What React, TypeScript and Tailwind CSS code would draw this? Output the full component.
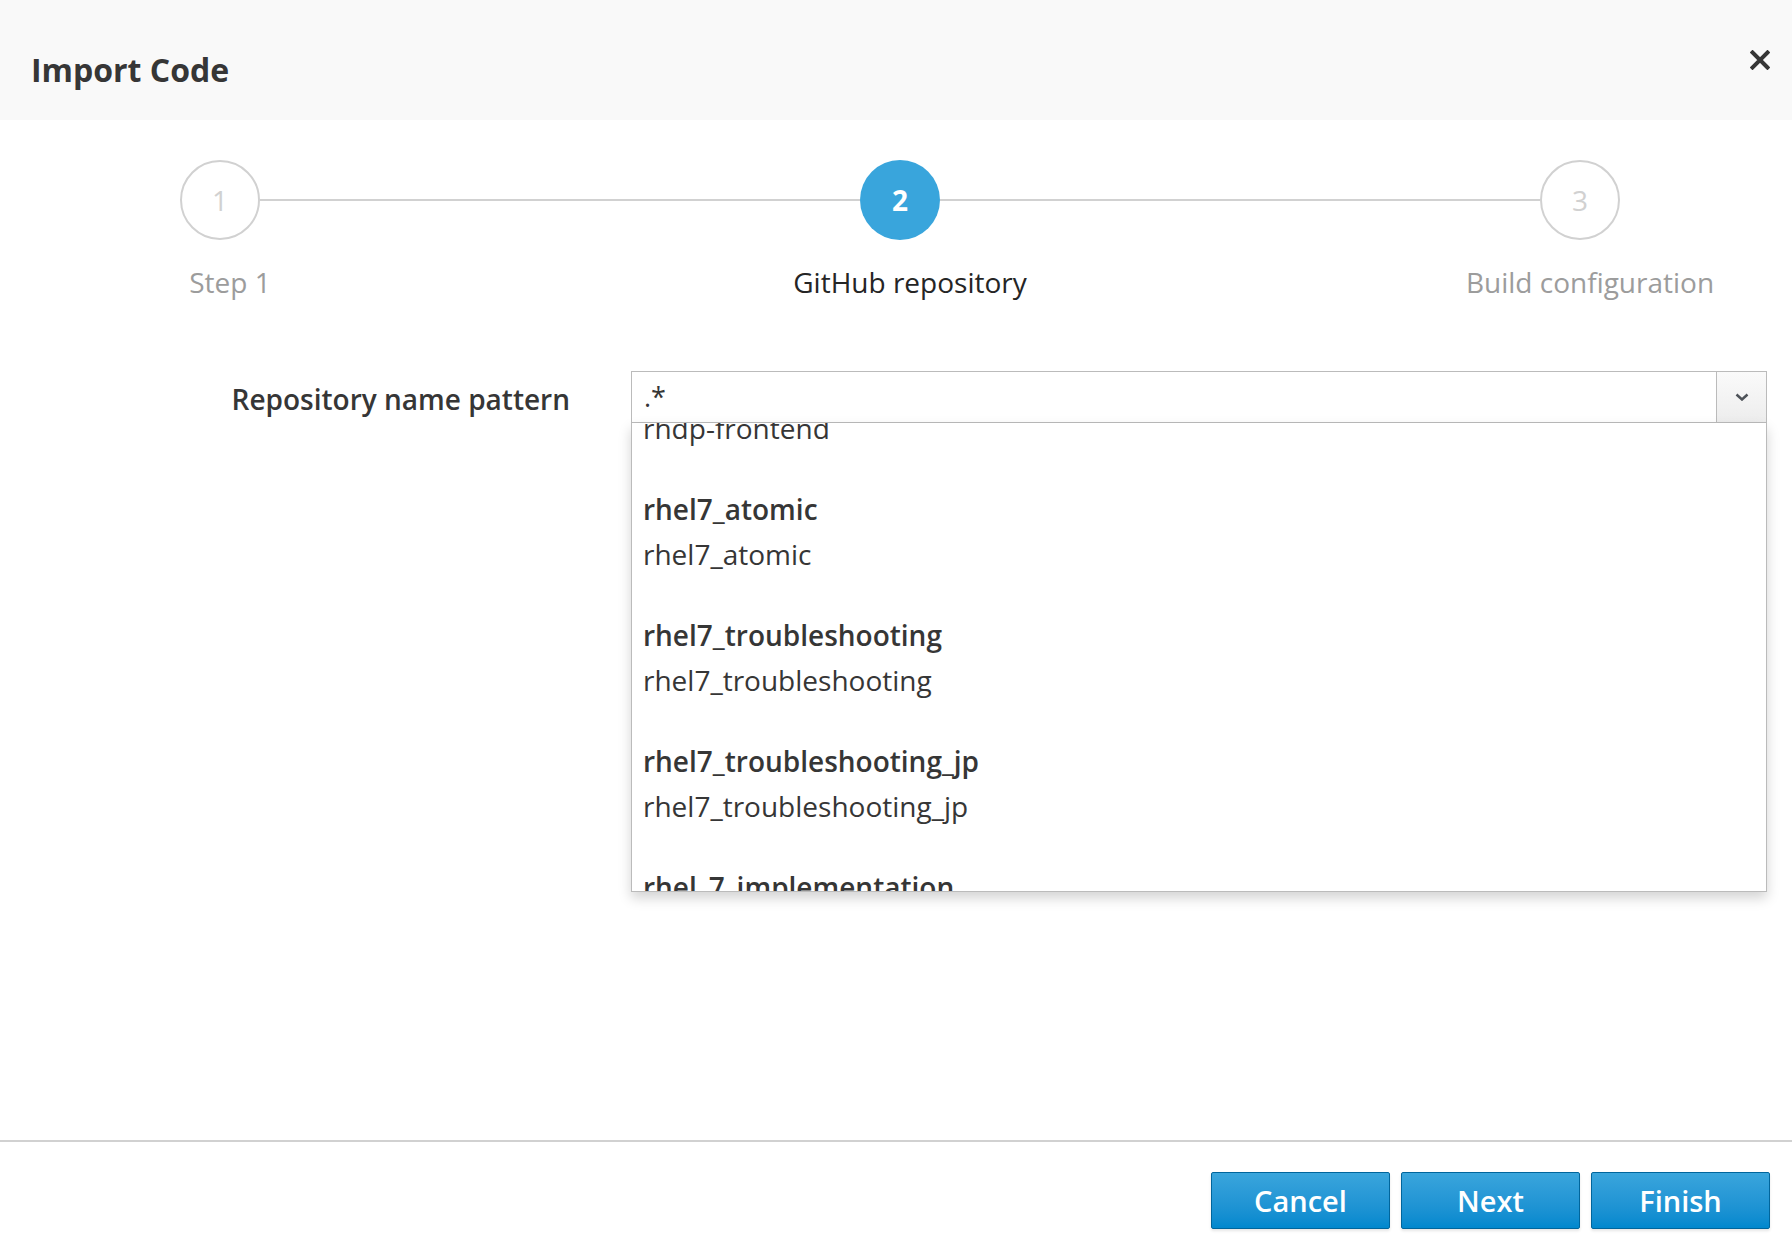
import React from 'react';

const repos = [
  'rhdp-frontend',
  'rhel7_atomic',
  'rhel7_troubleshooting',
  'rhel7_troubleshooting_jp',
  'rhel_7_implementation',
];

function Step({ n, label, active }: { n: number; label: string; active?: boolean }) {
  return (
    <div className="w-[80px] flex flex-col items-center shrink-0">
      <div
        className={
          active
            ? 'w-[80px] h-[80px] rounded-full bg-[#39a5dc] flex items-center justify-center text-white text-[28px] font-bold leading-none'
            : 'w-[80px] h-[80px] rounded-full border-2 border-[#d1d1d1] bg-white flex items-center justify-center text-[#d1d1d1] text-[28px] leading-none'
        }
      >
        {n}
      </div>
      <div
        className={
          active
            ? 'mt-[23px] pl-[20px] text-[28px] leading-[38px] whitespace-nowrap text-[#252525]'
            : 'mt-[23px] pl-[20px] text-[28px] leading-[38px] whitespace-nowrap text-[#9c9c9c]'
        }
      >
        {label}
      </div>
    </div>
  );
}

export default function App() {
  return (
    <div className="w-[1792px] h-[1256px] bg-white flex flex-col font-['Open_Sans',sans-serif] text-[#363636]">
      <header className="h-[120px] shrink-0 bg-[#f9f9f9] flex items-start justify-between pl-[31px] pr-[22px] pt-[48px]">
        <h1 className="text-[32px] font-bold leading-[44px]">Import Code</h1>
        <button className="mt-[2px] w-[20px] h-[20px]">
          <svg viewBox="0 0 20 20" width="20" height="20">
            <path d="M2.5 2.5 L17.5 17.5 M17.5 2.5 L2.5 17.5" stroke="#363636" strokeWidth="4" strokeLinecap="square" />
          </svg>
        </button>
      </header>

      <main className="flex-1 flex flex-col">
        <div className="flex items-start pl-[180px] pr-[172px] pt-[40px]">
          <Step n={1} label="Step 1" />
          <div className="flex-1 h-[2px] bg-[#d1d1d1] mt-[39px]" />
          <Step n={2} label="GitHub repository" active />
          <div className="flex-1 h-[2px] bg-[#d1d1d1] mt-[39px]" />
          <Step n={3} label="Build configuration" />
        </div>

        <div className="flex items-start mt-[70px] pr-[25px]">
          <label className="w-[570px] shrink-0 text-right text-[28px] font-semibold leading-[52px] pt-[2px]">
            Repository name pattern
          </label>
          <div className="ml-[61px] flex-1 flex flex-col">
            <div className="flex h-[52px] border border-[#bbbbbb] bg-white">
              <div className="flex-1 px-[12px] text-[27px] leading-[50px] text-[#363636]">.*</div>
              <div className="w-[50px] border-l border-[#bbbbbb] bg-linear-to-b from-[#fafafa] to-[#ededed] flex items-center justify-center">
                <svg viewBox="0 0 14 8" width="14" height="8">
                  <path d="M1.5 1.5 L7 6.5 L12.5 1.5" fill="none" stroke="#4d5258" strokeWidth="2.5" />
                </svg>
              </div>
            </div>
            <div className="h-[469px] border border-t-0 border-[#bbbbbb] bg-white overflow-hidden shadow-[0_6px_12px_rgba(0,0,0,0.175)]">
              <div className="-mt-[80px]">
                {repos.map((r) => (
                  <div key={r} className="py-[18px] pl-[11px] text-[28px] leading-[45px]">
                    <div className="font-semibold text-[#363636]">{r}</div>
                    <div className="text-[#363636]">{r}</div>
                  </div>
                ))}
              </div>
            </div>
          </div>
        </div>
      </main>

      <footer className="h-[116px] shrink-0 border-t-2 border-[#d1d1d1] flex items-start justify-end gap-[11px] pt-[30px] pr-[22px]">
        {['Cancel', 'Next', 'Finish'].map((b) => (
          <button
            key={b}
            className="w-[179px] h-[57px] rounded-[2px] border border-[#00659c] bg-linear-to-b from-[#39a5dc] to-[#0088ce] text-white text-[29px] font-semibold shadow-[0_2px_3px_rgba(0,0,0,0.1)]"
          >
            {b}
          </button>
        ))}
      </footer>
    </div>
  );
}
